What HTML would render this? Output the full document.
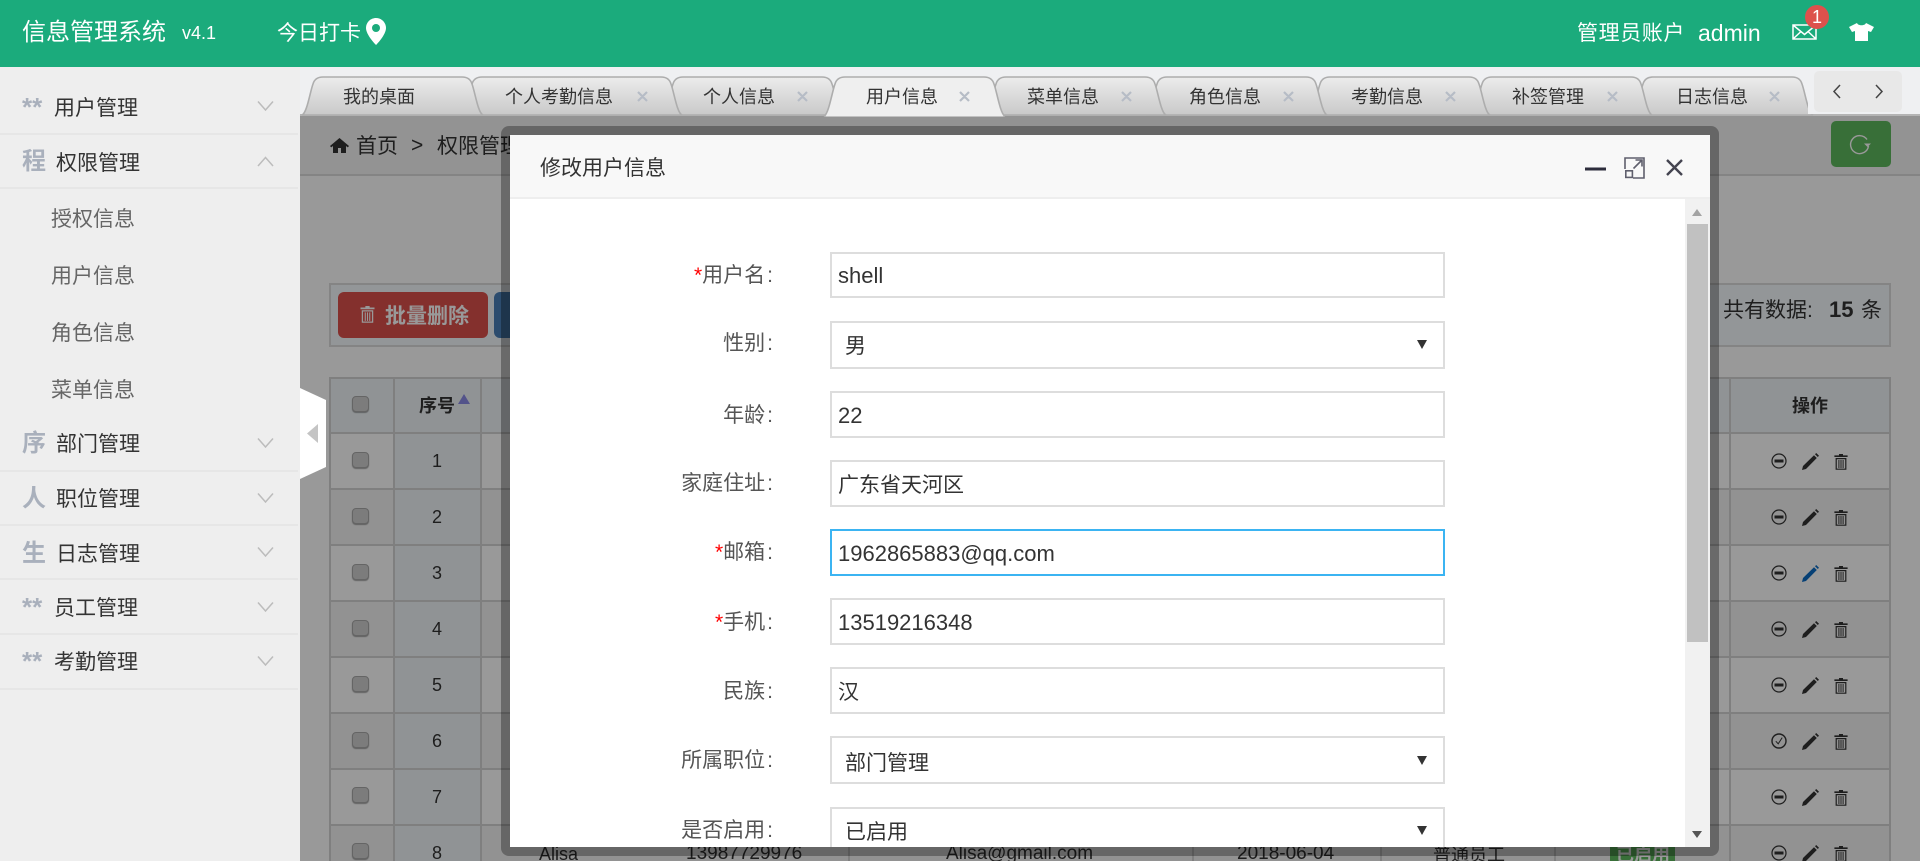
<!DOCTYPE html>
<html lang="zh-CN"><head><meta charset="utf-8"><title>信息管理系统</title>
<style>
html,body{margin:0;padding:0;width:1920px;height:861px;overflow:hidden;background:#fff}
body{font-family:"Liberation Sans","Noto Sans CJK SC",sans-serif;font-size:21px;color:#333;position:relative}
div,svg{position:absolute}
.t{position:absolute;white-space:nowrap;line-height:30px;height:30px}
.ct{text-align:center}
.s{font-size:21px;color:#333;left:56px}
.sub{font-size:21px;color:#666;left:51px}
.ic{font-size:24px;color:#a9b0bc;left:22px;font-weight:bold}
.ast{font-size:26px;color:#a9b0bc;left:22px;font-weight:bold;line-height:30px}
.ln{left:0;width:298px;height:2px;background:#e6e6e6}
.tb{font-size:18px;color:#333}
.h{background:#d4d4d4;height:2px;left:329px;width:1562px}
.v{background:#d4d4d4;width:2px;top:377px;height:484px}
.cb{left:352px;width:17px;height:16px;box-sizing:border-box;background:#cfcfcf;border:1px solid #a8a8a8;border-radius:4px;box-shadow:0 1px 1px rgba(0,0,0,.35)}
.n{font-size:18px;color:#333;left:394px;width:86px;text-align:center}
.lb{font-size:21px;color:#555;right:1147px;text-align:right}
.lb i{font-style:normal;color:#f00}
.lb b{font-weight:normal;margin-left:2px}
.in{left:830px;width:615px;box-sizing:border-box;border:2px solid #ddd;background:#fff}
.v1{font-size:22px;color:#333;left:838px}
.v2{font-size:21px;color:#333;left:838px}
.v3{font-size:21px;color:#333;left:845px}
.ar{width:0;height:0;left:1417px;border-left:5px solid transparent;border-right:5px solid transparent;border-top:9px solid #333}
.rw{font-size:18px;color:#333}
</style></head>
<body>
<svg width="0" height="0" style="position:absolute">
<defs>
<linearGradient id="g" gradientUnits="userSpaceOnUse" x1="0" y1="77" x2="0" y2="115"><stop offset="0" stop-color="#ececec"/><stop offset="1" stop-color="#c9c9c9"/></linearGradient>
<symbol id="mc" viewBox="0 0 16 16"><circle cx="8" cy="8" r="7" fill="none" stroke="#333" stroke-width="1.2"/><rect x="3.5" y="6.5" width="9" height="3" fill="#333"/></symbol>
<symbol id="ck" viewBox="0 0 16 16"><circle cx="8" cy="8" r="7" fill="none" stroke="#333" stroke-width="1.4"/><path d="M4.8 8.2L7.2 10.8L11.2 4.6" fill="none" stroke="#333" stroke-width="1"/></symbol>
<symbol id="pn" viewBox="0 0 17 17"><path d="M0 17L1 13L12 2.2L14.8 5L4 16zM13 1.2L14.2 0L17 2.8L15.8 4z" fill="#333"/></symbol>
<symbol id="tr" viewBox="0 0 14 16"><path d="M5 0H9V1.4H13.6V3H.4V1.4H5z" fill="#333"/><path d="M2.2 4.6H11.8V15.2H2.2z" fill="none" stroke="#333" stroke-width="1.2"/><path d="M4.9 6V14M7 6V14M9.1 6V14" stroke="#333" stroke-width="1" fill="none"/></symbol>
</defs>
</svg>

<!-- header -->
<div style="left:0;top:0;width:1920px;height:67px;background:#1bab7c"></div>
<div class="t" style="left:22px;top:18px;font-size:24px;color:#fff">信息管理系统</div>
<div class="t" style="left:182px;top:18px;font-size:18px;color:#fff">v4.1</div>
<div class="t" style="left:277px;top:19px;font-size:21px;color:#fff">今日打卡</div>
<svg style="left:366px;top:18px" width="20" height="27" viewBox="0 0 20 27"><path d="M10 0C4.5 0 0 4.4 0 10c0 7 10 17 10 17s10-10 10-17C20 4.4 15.5 0 10 0z" fill="#fff"/><circle cx="10" cy="10" r="4" fill="#1bab7c"/></svg>
<div class="t" style="left:1577px;top:19px;font-size:21px;letter-spacing:.6px;color:#fff">管理员账户</div>
<div class="t" style="left:1698px;top:18px;font-size:23px;color:#fff">admin</div>
<svg style="left:1792px;top:24px" width="25" height="16" viewBox="0 0 25 16"><path d="M1 1H24V15H1zM1 1L12.5 10.5L24 1M1 15L9 7.5M24 15L16 7.5" fill="none" stroke="#fff" stroke-width="1.5"/></svg>
<div style="left:1805px;top:5px;width:24px;height:24px;border-radius:50%;background:#dd514c"></div>
<div class="t ct" style="left:1805px;top:3px;width:24px;font-size:18px;color:#fff;line-height:28px">1</div>
<svg style="left:1849px;top:23px" width="25" height="18" viewBox="0 0 25 18"><path d="M8 0L0 4L3 9L6 8V18H19V8L22 9L25 4L17 0C16 3 9 3 8 0z" fill="#fff"/></svg>

<!-- main page -->
<div style="left:300px;top:67px;width:1620px;height:49px;background:#eff0f2"></div>
<div style="left:300px;top:116px;width:1620px;height:59px;background:#f5f5f5"></div>
<div style="left:300px;top:174px;width:1620px;height:2px;background:#ddd"></div>
<svg style="left:330px;top:138px" width="19" height="15" viewBox="0 0 19 15"><path d="M9.5 0L0 8L1.2 9.4L3 8V15H8V10H11V15H16V8L17.8 9.4L19 8z" fill="#333"/></svg>
<div class="t" style="left:356px;top:132px;font-size:21px;color:#333">首页</div>
<div class="t" style="left:411px;top:131px;font-size:21px;color:#333">&gt;</div>
<div class="t" style="left:437px;top:132px;font-size:21px;color:#333">权限管理</div>
<div style="left:1831px;top:121px;width:60px;height:46px;background:#5eb95e;border-radius:5px"></div>
<svg style="left:1849px;top:133px" width="24" height="22" viewBox="0 0 24 22"><path d="M18 6.5A9 9 0 1 0 19.5 13" fill="none" stroke="#fff" stroke-width="1.4"/><path d="M15 10.5H22L18.5 14z" fill="#fff"/></svg>

<!-- toolbar -->
<div style="left:329px;top:283px;width:1562px;height:64px;box-sizing:border-box;background:#f5fafe;border:2px solid #ddd"></div>
<div style="left:338px;top:292px;width:150px;height:46px;background:#dd514c;border-radius:6px"></div>
<svg style="left:360px;top:306px" width="15" height="17" viewBox="0 0 14 16"><path d="M5 0H9V1.4H13.6V3H.4V1.4H5z" fill="#fff"/><path d="M2.2 4.6H11.8V15.2H2.2z" fill="none" stroke="#fff" stroke-width="1.2"/><path d="M4.9 6V14M7 6V14M9.1 6V14" stroke="#fff" stroke-width="1" fill="none"/></svg>
<div class="t" style="left:385px;top:302px;font-size:21px;font-weight:bold;color:#fff">批量删除</div>
<div style="left:494px;top:292px;width:60px;height:46px;background:#4a7fb8;border-radius:6px"></div>
<div class="t" style="left:1723px;top:296px;font-size:21px;color:#333">共有数据:</div>
<div class="t" style="left:1829px;top:295px;font-size:22px;font-weight:bold;color:#333">15</div>
<div class="t" style="left:1861px;top:296px;font-size:21px;color:#333">条</div>

<!-- table -->
<div style="left:329px;top:377px;width:1562px;height:56px;background:#f1f6f9"></div>
<div style="left:329px;top:489px;width:1562px;height:56px;background:#f3f3f3"></div>
<div style="left:329px;top:601px;width:1562px;height:56px;background:#f3f3f3"></div>
<div style="left:329px;top:713px;width:1562px;height:55px;background:#f3f3f3"></div>
<div style="left:329px;top:824px;width:1562px;height:37px;background:#f3f3f3"></div>
<div style="left:394px;top:433px;width:86px;height:428px;background:#f1f6f9"></div>
<div class="h" style="top:377px"></div><div class="h" style="top:432px"></div><div class="h" style="top:488px"></div><div class="h" style="top:544px"></div><div class="h" style="top:600px"></div><div class="h" style="top:656px"></div><div class="h" style="top:712px"></div><div class="h" style="top:768px"></div><div class="h" style="top:824px"></div>
<div class="v" style="left:329px"></div><div class="v" style="left:393px"></div><div class="v" style="left:480px"></div><div class="v" style="left:848px"></div><div class="v" style="left:1192px"></div><div class="v" style="left:1380px"></div><div class="v" style="left:1554px"></div><div class="v" style="left:1729px"></div><div class="v" style="left:1889px"></div>

<div class="t" style="left:419px;top:391px;font-size:18px;font-weight:bold;color:#333">序号</div>
<svg style="left:458px;top:394px" width="12" height="10" viewBox="0 0 12 10"><path d="M6 0L12 10H0z" fill="#8a8ae6"/></svg>
<div class="t" style="left:1792px;top:391px;font-size:18px;font-weight:bold;color:#333">操作</div>

<div class="cb" style="top:396px"></div>
<div class="cb" style="top:452px"></div><div class="cb" style="top:508px"></div><div class="cb" style="top:564px"></div><div class="cb" style="top:620px"></div><div class="cb" style="top:676px"></div><div class="cb" style="top:732px"></div><div class="cb" style="top:787px"></div><div class="cb" style="top:843px"></div>

<div class="t n" style="top:446px">1</div><div class="t n" style="top:502px">2</div><div class="t n" style="top:558px">3</div><div class="t n" style="top:614px">4</div><div class="t n" style="top:670px">5</div><div class="t n" style="top:726px">6</div><div class="t n" style="top:782px">7</div><div class="t n" style="top:838px">8</div>

<svg style="left:1771px;top:453px" width="16" height="16"><use href="#mc"/></svg><svg style="left:1802px;top:453px" width="17" height="17"><use href="#pn"/></svg><svg style="left:1834px;top:454px" width="14" height="16"><use href="#tr"/></svg>
<svg style="left:1771px;top:509px" width="16" height="16"><use href="#mc"/></svg><svg style="left:1802px;top:509px" width="17" height="17"><use href="#pn"/></svg><svg style="left:1834px;top:510px" width="14" height="16"><use href="#tr"/></svg>
<svg style="left:1771px;top:565px" width="16" height="16"><use href="#mc"/></svg><svg style="left:1802px;top:565px" width="17" height="17" viewBox="0 0 17 17"><path d="M0 17L1 13L12 2.2L14.8 5L4 16zM13 1.2L14.2 0L17 2.8L15.8 4z" fill="#0a6cc4"/></svg><svg style="left:1834px;top:566px" width="14" height="16"><use href="#tr"/></svg>
<svg style="left:1771px;top:621px" width="16" height="16"><use href="#mc"/></svg><svg style="left:1802px;top:621px" width="17" height="17"><use href="#pn"/></svg><svg style="left:1834px;top:622px" width="14" height="16"><use href="#tr"/></svg>
<svg style="left:1771px;top:677px" width="16" height="16"><use href="#mc"/></svg><svg style="left:1802px;top:677px" width="17" height="17"><use href="#pn"/></svg><svg style="left:1834px;top:678px" width="14" height="16"><use href="#tr"/></svg>
<svg style="left:1771px;top:733px" width="16" height="16"><use href="#ck"/></svg><svg style="left:1802px;top:733px" width="17" height="17"><use href="#pn"/></svg><svg style="left:1834px;top:734px" width="14" height="16"><use href="#tr"/></svg>
<svg style="left:1771px;top:789px" width="16" height="16"><use href="#mc"/></svg><svg style="left:1802px;top:789px" width="17" height="17"><use href="#pn"/></svg><svg style="left:1834px;top:790px" width="14" height="16"><use href="#tr"/></svg>
<svg style="left:1771px;top:845px" width="16" height="16"><use href="#mc"/></svg><svg style="left:1802px;top:845px" width="17" height="17"><use href="#pn"/></svg><svg style="left:1834px;top:846px" width="14" height="16"><use href="#tr"/></svg>

<div class="t rw" style="left:539px;top:839px">Alisa</div>
<div class="t rw" style="left:686px;top:839px;font-size:19px">13987729976</div>
<div class="t rw" style="left:946px;top:839px;font-size:19px">Alisa@gmail.com</div>
<div class="t rw" style="left:1237px;top:839px;font-size:19px">2018-06-04</div>
<div class="t rw" style="left:1433px;top:840px">普通员工</div>
<div style="left:1610px;top:838px;width:65px;height:30px;background:#5eb95e"></div>
<div class="t" style="left:1616px;top:840px;font-size:18px;font-weight:bold;color:#fff">已启用</div>

<!-- dim overlay -->
<div style="left:300px;top:116px;width:1620px;height:745px;background:rgba(0,0,0,.4)"></div>

<!-- tabs -->
<svg style="left:0;top:0" width="1920" height="120" viewBox="0 0 1920 120" fill="url(#g)" stroke="#adadad" stroke-width="1.6">
<rect x="300" y="114" width="1620" height="2" fill="#b4b4b4" stroke="none"/>
<path transform="translate(1646,0)" d="M-14,115 C-9,113 -6,92 -3,84 Q-1,77 7,77 H146 Q154,77 156,84 C159,92 162,113 167,115Z"/>
<path transform="translate(1485,0)" d="M-14,115 C-9,113 -6,92 -3,84 Q-1,77 7,77 H146 Q154,77 156,84 C159,92 162,113 167,115Z"/>
<path transform="translate(1323,0)" d="M-14,115 C-9,113 -6,92 -3,84 Q-1,77 7,77 H146 Q154,77 156,84 C159,92 162,113 167,115Z"/>
<path transform="translate(1160,0)" d="M-14,115 C-9,113 -6,92 -3,84 Q-1,77 7,77 H146 Q154,77 156,84 C159,92 162,113 167,115Z"/>
<path transform="translate(999,0)" d="M-14,115 C-9,113 -6,92 -3,84 Q-1,77 7,77 H146 Q154,77 156,84 C159,92 162,113 167,115Z"/>
<path transform="translate(676,0)" d="M-14,115 C-9,113 -6,92 -3,84 Q-1,77 7,77 H146 Q154,77 156,84 C159,92 162,113 167,115Z"/>
<path transform="translate(475,0)" d="M-14,115 C-9,113 -6,92 -3,84 Q-1,77 7,77 H186 Q194,77 196,84 C199,92 202,113 207,115Z"/>
<path transform="translate(316,0)" d="M-14,115 C-9,113 -6,92 -3,84 Q-1,77 7,77 H146 Q154,77 156,84 C159,92 162,113 167,115Z"/>
<path transform="translate(838,0)" fill="#efefef" d="M-14,116.5 C-9,113 -6,92 -3,84 Q-1,77 7,77 H146 Q154,77 156,84 C159,92 162,113 167,116.5"/>
<g stroke="#b6bcc6" stroke-width="2.2" fill="none">
<path d="M638 92l9 9m0-9l-9 9M798 92l9 9m0-9l-9 9M960 92l9 9m0-9l-9 9M1122 92l9 9m0-9l-9 9M1284 92l9 9m0-9l-9 9M1446 92l9 9m0-9l-9 9M1608 92l9 9m0-9l-9 9M1770 92l9 9m0-9l-9 9"/>
</g>
</svg>
<div style="left:1808px;top:67px;width:112px;height:47px;background:#eff0f2"></div>
<div style="left:1814px;top:71px;width:88px;height:41px;background:#e8e8e8;border-radius:5px"></div>
<svg style="left:1814px;top:71px" width="88" height="41" fill="none" stroke="#444" stroke-width="1.5"><path d="M26 14L20 20.5L26 27M62 14L68 20.5L62 27"/></svg>
<div class="t tb" style="left:343px;top:82px">我的桌面</div>
<div class="t tb" style="left:505px;top:82px">个人考勤信息</div>
<div class="t tb" style="left:703px;top:82px">个人信息</div>
<div class="t tb" style="left:866px;top:82px">用户信息</div>
<div class="t tb" style="left:1027px;top:82px">菜单信息</div>
<div class="t tb" style="left:1189px;top:82px">角色信息</div>
<div class="t tb" style="left:1351px;top:82px">考勤信息</div>
<div class="t tb" style="left:1512px;top:82px">补签管理</div>
<div class="t tb" style="left:1676px;top:82px">日志信息</div>

<!-- sidebar -->
<div style="left:0;top:67px;width:300px;height:794px;background:#eee"></div>
<div class="ln" style="top:133px"></div><div class="ln" style="top:187px"></div><div class="ln" style="top:470px"></div><div class="ln" style="top:524px"></div><div class="ln" style="top:578px"></div><div class="ln" style="top:633px"></div><div class="ln" style="top:688px"></div>
<div class="t ast" style="top:92px">**</div><div class="t s" style="top:94px;left:54px">用户管理</div>
<div class="t ic" style="top:147px">程</div><div class="t s" style="top:149px">权限管理</div>
<div class="t sub" style="top:205px">授权信息</div>
<div class="t sub" style="top:262px">用户信息</div>
<div class="t sub" style="top:319px">角色信息</div>
<div class="t sub" style="top:376px">菜单信息</div>
<div class="t ic" style="top:429px">序</div><div class="t s" style="top:430px">部门管理</div>
<div class="t ic" style="top:484px">人</div><div class="t s" style="top:485px">职位管理</div>
<div class="t ic" style="top:539px">生</div><div class="t s" style="top:540px">日志管理</div>
<div class="t ast" style="top:592px">**</div><div class="t s" style="top:594px;left:54px">员工管理</div>
<div class="t ast" style="top:646px">**</div><div class="t s" style="top:648px;left:54px">考勤管理</div>
<svg style="left:0;top:0" width="300" height="700" fill="none" stroke="#bcbcbc" stroke-width="1.5"><path d="M258 101.5L265.5 110L273 101.5M258 166L265.5 157.5L273 166M258 438.5L265.5 447L273 438.5M258 493.5L265.5 502L273 493.5M258 547.5L265.5 556L273 547.5M258 602.5L265.5 611L273 602.5M258 656.5L265.5 665L273 656.5"/></svg>
<div style="left:300px;top:388px;width:26px;height:91px;background:#fff;clip-path:polygon(0 0,26px 12px,26px 79px,0 91px)"></div>
<svg style="left:307px;top:424px" width="11" height="19"><path d="M11 0V19L0 9.5z" fill="#c4c4c4"/></svg>

<!-- modal -->
<div style="left:501px;top:126px;width:1218px;height:730px;box-sizing:border-box;border:9px solid rgba(0,0,0,.3);border-radius:8px;background:#fff;background-clip:padding-box"></div>
<div style="left:510px;top:135px;width:1200px;height:62px;background:#f8f8f8"></div>
<div style="left:510px;top:197px;width:1200px;height:2px;background:#eee"></div>
<div class="t" style="left:540px;top:154px;font-size:21px;color:#333">修改用户信息</div>
<svg style="left:1580px;top:150px" width="110" height="34" fill="none"><rect x="5" y="17.5" width="21" height="3" fill="#2d2d3c"/><path d="M45 19V8H64V28H53" stroke="#5f5f6d" stroke-width="1.6"/><rect x="45.8" y="20.8" width="6.6" height="6.6" stroke="#5f5f6d" stroke-width="1.6"/><path d="M53.5 18.5L61.5 10.5M55.5 10H62V16.5" stroke="#5f5f6d" stroke-width="1.6"/><path d="M87 10L102 25M102 10L87 25" stroke="#444450" stroke-width="2.4"/></svg>

<div style="left:1685px;top:199px;width:25px;height:648px;background:#f1f1f1"></div>
<div style="left:1687px;top:224px;width:21px;height:418px;background:#c1c1c1"></div>
<svg style="left:1692px;top:209px" width="10" height="7"><path d="M5 0L10 7H0z" fill="#a3a3a3"/></svg>
<svg style="left:1692px;top:831px" width="10" height="7"><path d="M0 0H10L5 7z" fill="#555"/></svg>

<div class="in" style="top:252px;height:46px"></div>
<div class="in" style="top:321px;height:48px"></div>
<div class="in" style="top:391px;height:47px"></div>
<div class="in" style="top:460px;height:47px"></div>
<div class="in" style="top:529px;height:47px;border-color:#3bb4f2"></div>
<div class="in" style="top:598px;height:47px"></div>
<div class="in" style="top:667px;height:47px"></div>
<div class="in" style="top:736px;height:48px"></div>
<div class="in" style="top:807px;height:40px;border-bottom:0"></div>
<div class="ar" style="top:340px"></div><div class="ar" style="top:756px"></div><div class="ar" style="top:826px"></div>

<div class="t lb" style="top:261px"><i>*</i>用户名<b>:</b></div>
<div class="t lb" style="top:329px">性别<b>:</b></div>
<div class="t lb" style="top:401px">年龄<b>:</b></div>
<div class="t lb" style="top:469px">家庭住址<b>:</b></div>
<div class="t lb" style="top:538px"><i>*</i>邮箱<b>:</b></div>
<div class="t lb" style="top:608px"><i>*</i>手机<b>:</b></div>
<div class="t lb" style="top:677px">民族<b>:</b></div>
<div class="t lb" style="top:746px">所属职位<b>:</b></div>
<div class="t lb" style="top:816px">是否启用<b>:</b></div>

<div class="t v1" style="top:261px">shell</div>
<div class="t v3" style="top:332px">男</div>
<div class="t v1" style="top:401px">22</div>
<div class="t v2" style="top:471px">广东省天河区</div>
<div class="t v1" style="top:539px">1962865883@qq.com</div>
<div class="t v1" style="top:608px">13519216348</div>
<div class="t v2" style="top:678px">汉</div>
<div class="t v3" style="top:749px">部门管理</div>
<div class="t v3" style="top:818px">已启用</div>
</body></html>
